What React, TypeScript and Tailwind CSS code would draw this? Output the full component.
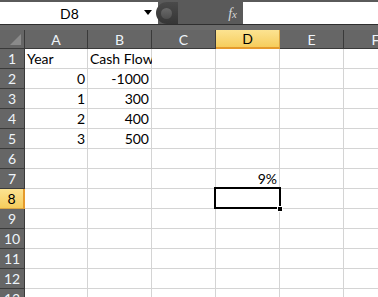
import React from "react";

const cols = ["A", "B", "C", "D", "E", "F"];
const widths = ["w-[63px]", "w-[64px]", "w-[64px]", "w-[64px]", "w-[64px]", "w-[64px]"];

type Cell = { text: string; align: "left" | "right" };
const data: Record<string, Cell> = {
  "1A": { text: "Year", align: "left" },
  "1B": { text: "Cash Flow", align: "left" },
  "2A": { text: "0", align: "right" },
  "2B": { text: "-1000", align: "right" },
  "3A": { text: "1", align: "right" },
  "3B": { text: "300", align: "right" },
  "4A": { text: "2", align: "right" },
  "4B": { text: "400", align: "right" },
  "5A": { text: "3", align: "right" },
  "5B": { text: "500", align: "right" },
  "7D": { text: "9%", align: "right" },
};

function FormulaBar() {
  return (
    <div className="h-[30px] bg-[#5a5a5a] flex flex-col">
      <div className="h-[25px] pt-[2px] flex border-b border-[#2f2f2f]">
        <div className="w-[158px] h-[22px] bg-white flex items-center relative shrink-0">
          <span className="absolute left-[60px] text-[14px] text-black">D8</span>
          <span className="absolute left-[144px] top-[8px] w-0 h-0 border-l-[4px] border-r-[4px] border-t-[5px] border-l-transparent border-r-transparent border-t-black" />
        </div>
        <div className="w-[85px] h-[22px] flex items-center relative shrink-0">
          <div className="absolute left-[-2px] w-[22px] h-[22px] rounded-l-full bg-gradient-to-b from-[#4a4a4a] to-[#363636] flex items-center pl-[5px]">
            <div className="w-[11px] h-[11px] rounded-full bg-gradient-to-b from-[#6a6a6a] to-[#4e4e4e]" />
          </div>
          <span className="absolute right-[6px] text-[14px] italic text-[#d8d8d8] font-['Liberation_Serif',serif]">
            f<span className="text-[11px]">x</span>
          </span>
        </div>
        <div className="flex-1 h-[22px] bg-white" />
      </div>
      <div className="flex-1 bg-[#6b6b6b]" />
    </div>
  );
}

function ColumnHeaders() {
  return (
    <div className="flex h-[19px] bg-[#666666]">
      <div className="w-[25px] shrink-0 border-r border-b border-[#3a3a3a] relative bg-[#666666]">
        <span
          className="absolute right-[3px] bottom-[3px] w-0 h-0"
          style={{ borderBottom: "11px solid #8a8a8a", borderLeft: "11px solid transparent" }}
        />
      </div>
      {cols.map((c, i) => (
        <div
          key={c}
          className={`${widths[i]} shrink-0 flex items-center justify-center text-[14px] border-r ${
            c === "D"
              ? "bg-gradient-to-b from-[#fce391] to-[#f6cd5b] text-black border-b-2 border-b-[#e59a2c] border-r-[#d9a441]"
              : "text-[#eef4fa] border-b border-[#3a3a3a]"
          }`}
        >
          {c}
        </div>
      ))}
    </div>
  );
}

function Row({ n }: { n: number }) {
  const sel = n === 8;
  return (
    <div className={`flex h-[20px] ${sel ? "relative z-10" : ""}`}>
      <div
        className={`w-[25px] shrink-0 flex items-center justify-center text-[14px] border-r border-b ${
          sel
            ? "bg-gradient-to-b from-[#fce391] to-[#f6cd5b] text-black border-[#d9a441] border-r-2 border-r-[#e59a2c]"
            : "bg-[#666666] text-[#eef4fa] border-[#3a3a3a]"
        }`}
      >
        {n}
      </div>
      {cols.map((c, i) => {
        const cell = data[`${n}${c}`];
        const isSel = sel && c === "D";
        return (
          <div
            key={c}
            className={`${widths[i]} shrink-0 relative border-r border-b border-[#d4d4d4] bg-white flex items-center text-[14px] text-black whitespace-nowrap ${
              cell?.align === "right" ? "justify-end pr-[2px]" : "pl-[2px]"
            } ${isSel ? "z-10" : ""}`}
          >
            {cell?.text}
            {isSel && (
              <>
                <div className="absolute left-[-2px] top-[-2px] right-[-2px] bottom-[-1px] border-2 border-black" />
                <div className="absolute right-[-4px] bottom-[-4px] w-[6px] h-[6px] bg-black border border-white" />
              </>
            )}
          </div>
        );
      })}
    </div>
  );
}

export default function App() {
  return (
    <div className="w-[378px] h-[297px] overflow-hidden bg-white font-['Lato',sans-serif]">
      <FormulaBar />
      <ColumnHeaders />
      {Array.from({ length: 13 }, (_, i) => (
        <Row key={i} n={i + 1} />
      ))}
    </div>
  );
}
